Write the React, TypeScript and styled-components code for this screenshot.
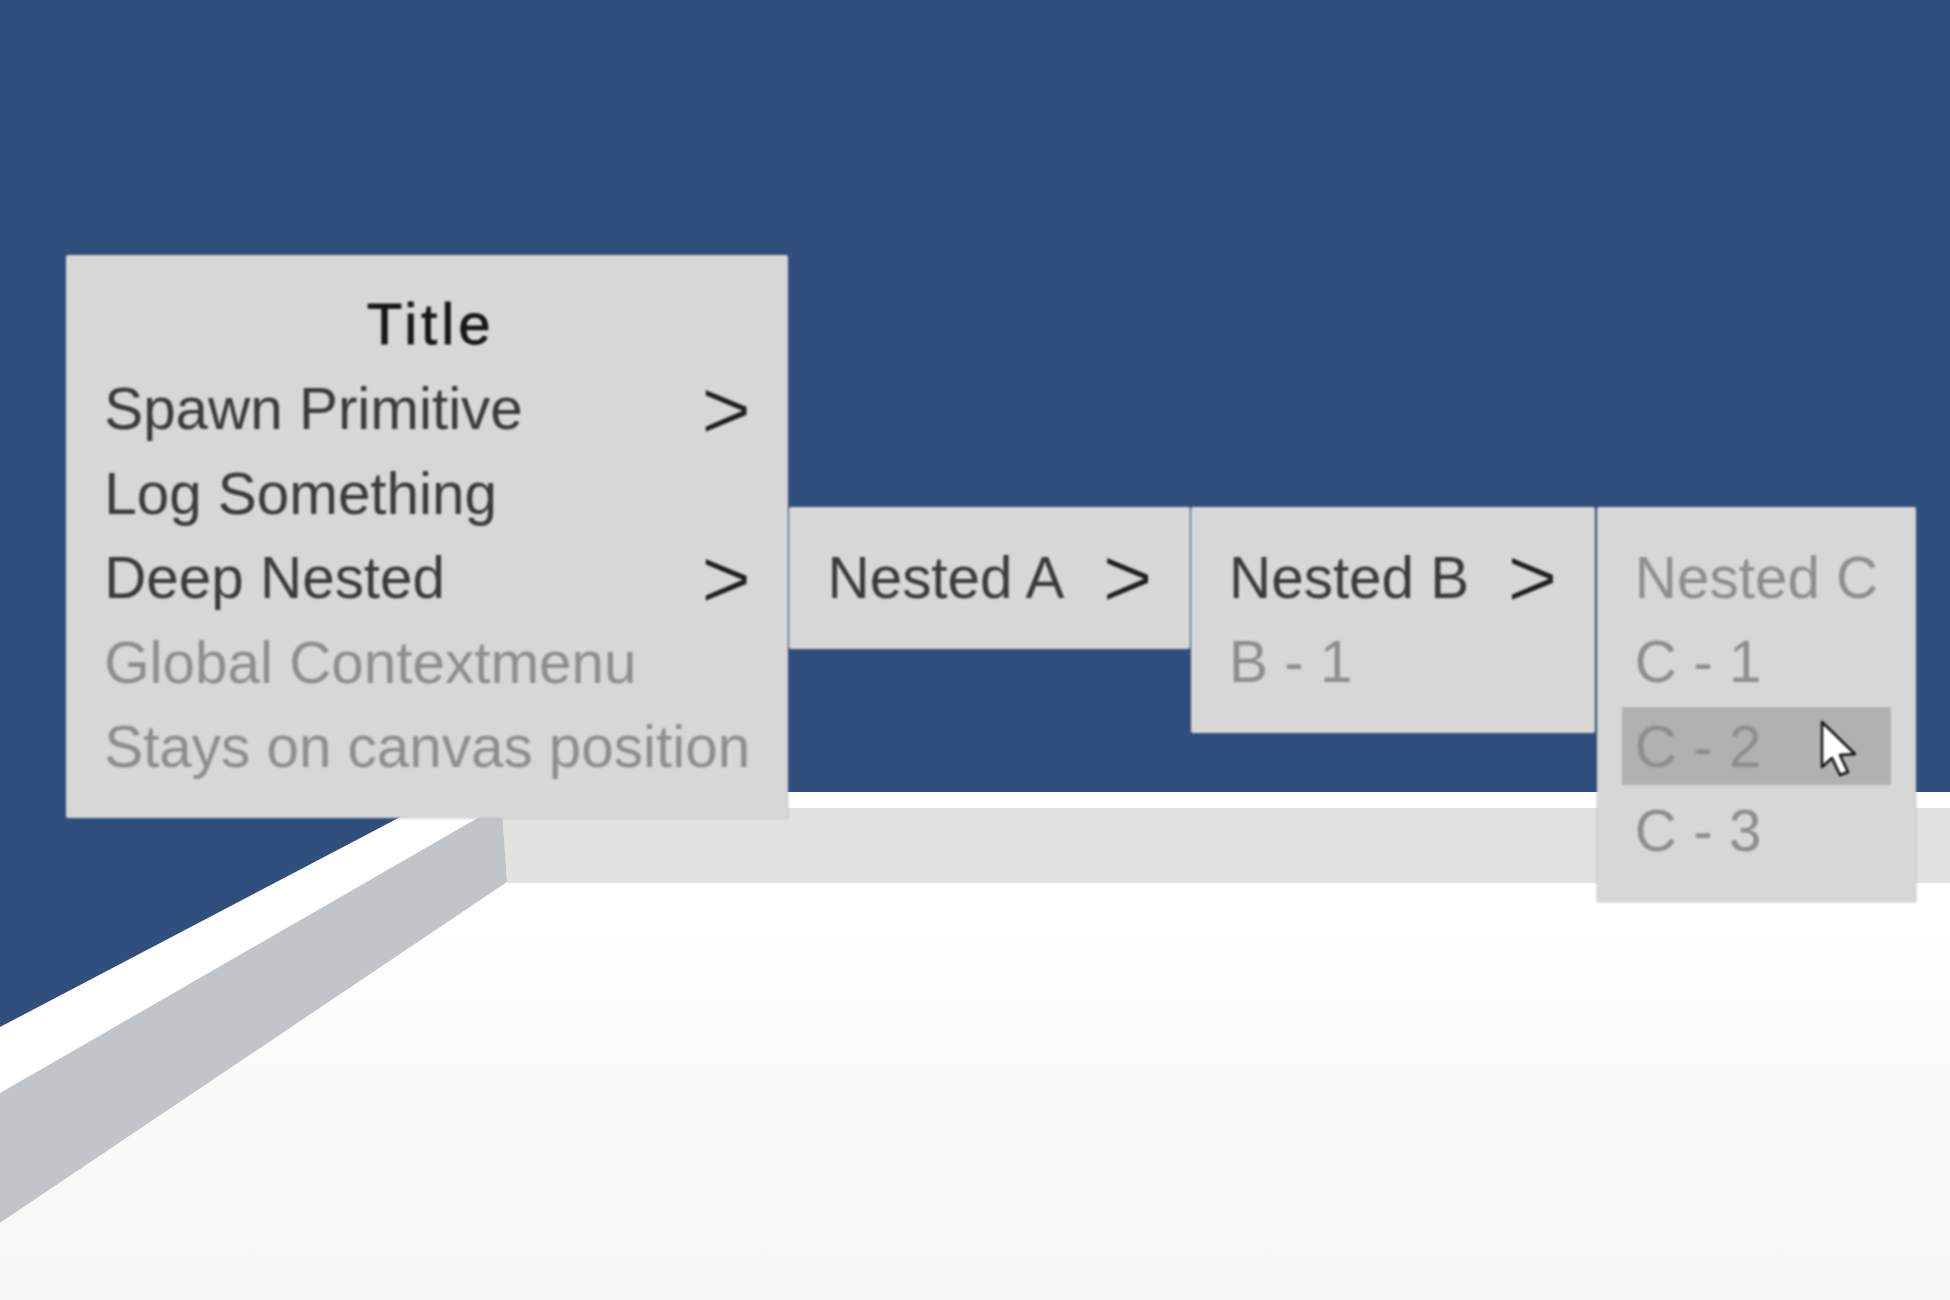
import React from 'react'
import styled, { createGlobalStyle } from 'styled-components'

const GlobalStyle = createGlobalStyle`
  html, body {
    margin: 0;
    padding: 0;
    background: #314f7c;
  }
  body {
    overflow: hidden;
  }
`

const Stage = styled.div`
  position: relative;
  width: 1950px;
  height: 1300px;
  overflow: hidden;
  font-family: "Liberation Sans", Arial, sans-serif;
`

const Scene = styled.svg`
  position: absolute;
  inset: 0;
  display: block;
`

const MenuStrip = styled.div`
  position: relative;
  display: flex;
  align-items: flex-start;
  padding: 255px 0 0 66px;
  filter: blur(0.8px);
`

const SubMenus = styled.div`
  display: flex;
  align-items: flex-start;
  margin: 252px 0 0 1px;
  gap: 1px;
`

const Panel = styled.div<{ $offset?: number }>`
  display: flex;
  flex-direction: column;
  gap: 6.6px;
  padding: 31px 25px 32.5px;
  margin-left: ${p => p.$offset ?? 0}px;
  background: #d7d7d7;
  border-radius: 2px;
  box-shadow: 0 0 1.5px rgba(60, 70, 90, 0.75);
`

const Title = styled.div`
  height: 78px;
  margin-top: -1px;
  padding-left: 7px;
  line-height: 78px;
  text-align: center;
  font-size: 58.2px;
  font-weight: 400;
  letter-spacing: 4px;
  color: #171717;
  -webkit-text-stroke: 0.8px #171717;
`

const Row = styled.div<{ $disabled?: boolean; $hover?: boolean }>`
  position: relative;
  display: flex;
  align-items: center;
  justify-content: space-between;
  gap: 38px;
  height: 78px;
  padding: 0 13.2px;
  font-size: 58.4px;
  white-space: nowrap;
  color: ${p => (p.$disabled ? '#8e8e8e' : '#3b3b3b')};
  background: ${p => (p.$hover ? '#b1b1b1' : 'transparent')};
`

const Arrow = styled.span`
  font-size: 86px;
  line-height: 78px;
  font-weight: 400;
  color: #1f1f1f;
  margin-right: -1px;
  -webkit-text-stroke: 1px #d7d7d7;
`

const Cursor = styled.svg`
  position: absolute;
  left: 198px;
  top: 13px;
  width: 37px;
  height: 57px;
`

export default function App() {
  return (
    <Stage>
      <GlobalStyle />
      <Scene width="1950" height="1300" viewBox="0 0 1950 1300">
        <defs>
          <linearGradient id="floor" x1="0" y1="883" x2="0" y2="1300" gradientUnits="userSpaceOnUse">
            <stop offset="0" stopColor="#ffffff" />
            <stop offset="1" stopColor="#f6f6f4" />
          </linearGradient>
        </defs>
        <rect width="1950" height="1300" fill="#314f7c" />
        <polygon points="0,1027 448,792 1950,792 1950,1300 0,1300" fill="#ffffff" />
        <polygon points="502,808 1950,808 1950,883 507,883" fill="#e2e3e1" />
        <polygon points="0,1093 495,808 502,808 507,882 0,1223" fill="#c2c5c8" />
        <polygon points="507,883 1950,883 1950,1300 0,1300 0,1223" fill="url(#floor)" />
      </Scene>

      <MenuStrip>
        <Panel>
          <Title>Title</Title>
          <Row>
            Spawn Primitive<Arrow>&gt;</Arrow>
          </Row>
          <Row>Log Something</Row>
          <Row>
            Deep Nested<Arrow>&gt;</Arrow>
          </Row>
          <Row $disabled>Global Contextmenu</Row>
          <Row $disabled>Stays on canvas position</Row>
        </Panel>
        <SubMenus>
          <Panel>
            <Row>
              Nested A<Arrow>&gt;</Arrow>
            </Row>
          </Panel>
          <Panel>
            <Row>
              Nested B<Arrow>&gt;</Arrow>
            </Row>
            <Row $disabled>B - 1</Row>
          </Panel>
          <Panel $offset={1}>
            <Row $disabled>Nested C</Row>
            <Row $disabled>C - 1</Row>
            <Row $disabled $hover>
              C - 2
              <Cursor viewBox="0 0 37 57">
                <path
                  d="M2 2 L2 47 L12 38 L20 55 L28 52 L20 35 L35 34 Z"
                  fill="#ffffff"
                  stroke="#111111"
                  strokeWidth="2.5"
                  strokeLinejoin="round"
                />
              </Cursor>
            </Row>
            <Row $disabled>C - 3</Row>
          </Panel>
        </SubMenus>
      </MenuStrip>
    </Stage>
  )
}
